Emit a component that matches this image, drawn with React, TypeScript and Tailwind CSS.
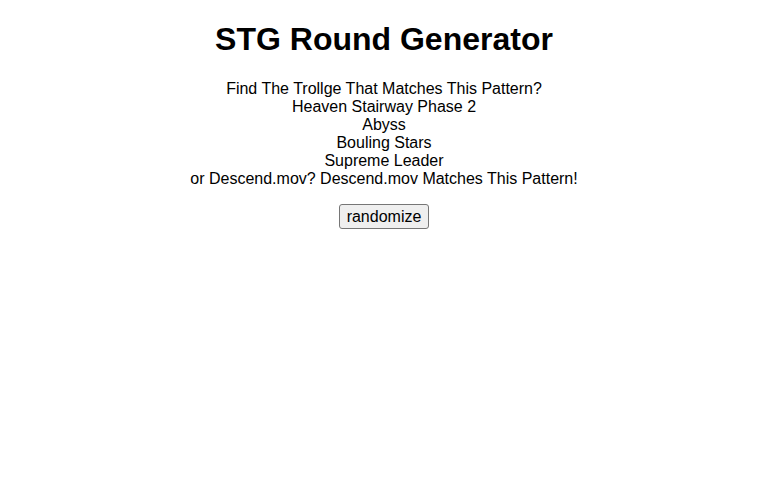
import { useState } from 'react';

const LINES = [
  'Find The Trollge That Matches This Pattern?',
  'Heaven Stairway Phase 2',
  'Abyss',
  'Bouling Stars',
  'Supreme Leader',
  'or Descend.mov? Descend.mov Matches This Pattern!',
];

export default function App() {
  const [lines] = useState(LINES);

  return (
    <div className="min-h-[480px] bg-white text-center text-black font-['Liberation_Sans',Arial,sans-serif]">
      <h1 className="pt-[21px] mb-[22px] text-[32px] leading-[37px] font-bold">STG Round Generator</h1>

      {/* pattern text */}
      <div className="text-base leading-[18px]">
        {lines.map((l, i) => <div key={i}>{l}</div>)}
      </div>

      <div className="mt-[16px] flex justify-center">
        <button
          className="px-[7px] h-[25px] text-base leading-[18px] bg-[#efefef] border border-[#767676] rounded-[3px] text-black"
        >
          randomize
        </button>
      </div>
    </div>
  );
}
